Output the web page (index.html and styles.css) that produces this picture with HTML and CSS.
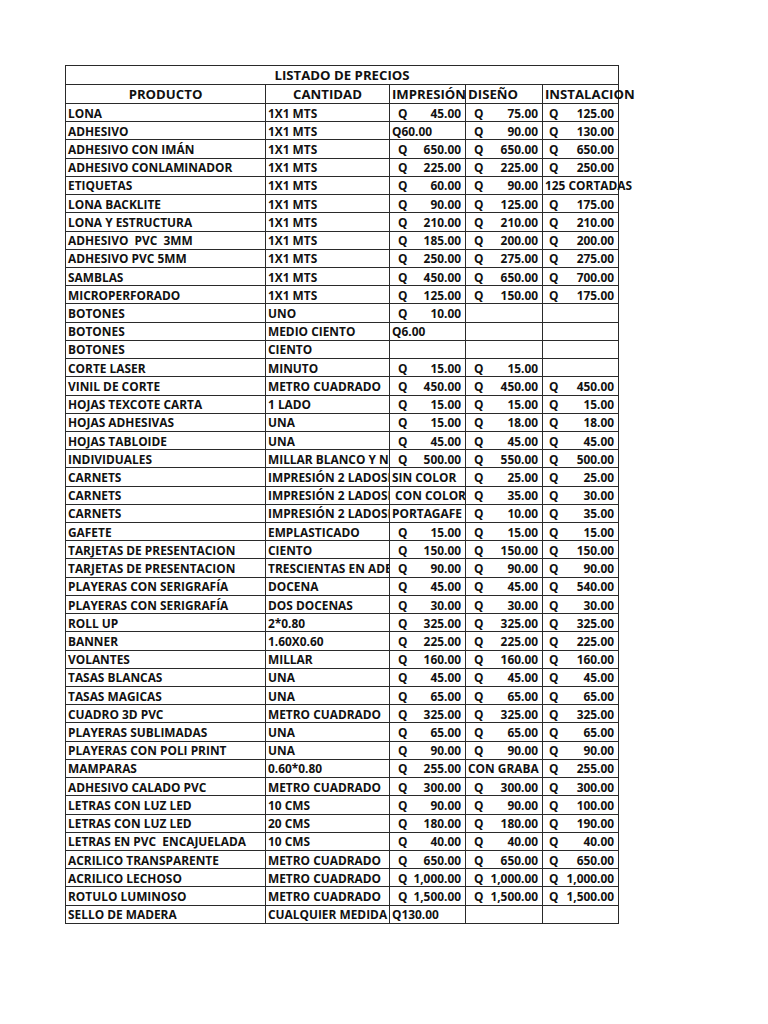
FILE: index.html
```html
<!DOCTYPE html>
<html lang="es">
<head>
<meta charset="utf-8">
<title>Listado de precios</title>
<link rel="stylesheet" href="styles.css">
</head>
<body>
<div class="page">
<table class="sheet">
<colgroup><col class="c1"><col class="c2"><col class="c3"><col class="c4"><col class="c5"></colgroup>
<tr class="title"><td colspan="5">LISTADO DE PRECIOS</td></tr>
<tr class="head"><td class="ctr">PRODUCTO</td><td class="ctr">CANTIDAD</td><td>IMPRESIÓN</td><td>DISEÑO</td><td>INSTALACION</td></tr>
<tr><td>LONA</td><td>1X1 MTS</td><td class="n"><span>Q</span>45.00</td><td class="n"><span>Q</span>75.00</td><td class="n"><span>Q</span>125.00</td></tr>
<tr><td>ADHESIVO</td><td>1X1 MTS</td><td>Q60.00</td><td class="n"><span>Q</span>90.00</td><td class="n"><span>Q</span>130.00</td></tr>
<tr><td>ADHESIVO CON IMÁN</td><td>1X1 MTS</td><td class="n"><span>Q</span>650.00</td><td class="n"><span>Q</span>650.00</td><td class="n"><span>Q</span>650.00</td></tr>
<tr><td>ADHESIVO CONLAMINADOR</td><td>1X1 MTS</td><td class="n"><span>Q</span>225.00</td><td class="n"><span>Q</span>225.00</td><td class="n"><span>Q</span>250.00</td></tr>
<tr><td>ETIQUETAS</td><td>1X1 MTS</td><td class="n"><span>Q</span>60.00</td><td class="n"><span>Q</span>90.00</td><td>125 CORTADAS</td></tr>
<tr><td>LONA BACKLITE</td><td>1X1 MTS</td><td class="n"><span>Q</span>90.00</td><td class="n"><span>Q</span>125.00</td><td class="n"><span>Q</span>175.00</td></tr>
<tr><td>LONA Y ESTRUCTURA</td><td>1X1 MTS</td><td class="n"><span>Q</span>210.00</td><td class="n"><span>Q</span>210.00</td><td class="n"><span>Q</span>210.00</td></tr>
<tr><td>ADHESIVO&nbsp; PVC&nbsp; 3MM</td><td>1X1 MTS</td><td class="n"><span>Q</span>185.00</td><td class="n"><span>Q</span>200.00</td><td class="n"><span>Q</span>200.00</td></tr>
<tr><td>ADHESIVO PVC 5MM</td><td>1X1 MTS</td><td class="n"><span>Q</span>250.00</td><td class="n"><span>Q</span>275.00</td><td class="n"><span>Q</span>275.00</td></tr>
<tr><td>SAMBLAS</td><td>1X1 MTS</td><td class="n"><span>Q</span>450.00</td><td class="n"><span>Q</span>650.00</td><td class="n"><span>Q</span>700.00</td></tr>
<tr><td>MICROPERFORADO</td><td>1X1 MTS</td><td class="n"><span>Q</span>125.00</td><td class="n"><span>Q</span>150.00</td><td class="n"><span>Q</span>175.00</td></tr>
<tr><td>BOTONES</td><td>UNO</td><td class="n"><span>Q</span>10.00</td><td></td><td></td></tr>
<tr><td>BOTONES</td><td>MEDIO CIENTO</td><td>Q6.00</td><td></td><td></td></tr>
<tr><td>BOTONES</td><td>CIENTO</td><td></td><td></td><td></td></tr>
<tr><td>CORTE LASER</td><td>MINUTO</td><td class="n"><span>Q</span>15.00</td><td class="n"><span>Q</span>15.00</td><td></td></tr>
<tr><td>VINIL DE CORTE</td><td>METRO CUADRADO</td><td class="n"><span>Q</span>450.00</td><td class="n"><span>Q</span>450.00</td><td class="n"><span>Q</span>450.00</td></tr>
<tr><td>HOJAS TEXCOTE CARTA</td><td>1 LADO</td><td class="n"><span>Q</span>15.00</td><td class="n"><span>Q</span>15.00</td><td class="n"><span>Q</span>15.00</td></tr>
<tr><td>HOJAS ADHESIVAS</td><td>UNA</td><td class="n"><span>Q</span>15.00</td><td class="n"><span>Q</span>18.00</td><td class="n"><span>Q</span>18.00</td></tr>
<tr><td>HOJAS TABLOIDE</td><td>UNA</td><td class="n"><span>Q</span>45.00</td><td class="n"><span>Q</span>45.00</td><td class="n"><span>Q</span>45.00</td></tr>
<tr><td>INDIVIDUALES</td><td class="clip">MILLAR BLANCO Y NE</td><td class="n"><span>Q</span>500.00</td><td class="n"><span>Q</span>550.00</td><td class="n"><span>Q</span>500.00</td></tr>
<tr><td>CARNETS</td><td class="clip">IMPRESIÓN 2 LADOSP</td><td>SIN COLOR</td><td class="n"><span>Q</span>25.00</td><td class="n"><span>Q</span>25.00</td></tr>
<tr><td>CARNETS</td><td class="clip">IMPRESIÓN 2 LADOSP</td><td class="clip">&nbsp;CON COLOR</td><td class="n"><span>Q</span>35.00</td><td class="n"><span>Q</span>30.00</td></tr>
<tr><td>CARNETS</td><td class="clip">IMPRESIÓN 2 LADOSP</td><td class="clip">PORTAGAFE</td><td class="n"><span>Q</span>10.00</td><td class="n"><span>Q</span>35.00</td></tr>
<tr><td>GAFETE</td><td>EMPLASTICADO</td><td class="n"><span>Q</span>15.00</td><td class="n"><span>Q</span>15.00</td><td class="n"><span>Q</span>15.00</td></tr>
<tr><td>TARJETAS DE PRESENTACION</td><td>CIENTO</td><td class="n"><span>Q</span>150.00</td><td class="n"><span>Q</span>150.00</td><td class="n"><span>Q</span>150.00</td></tr>
<tr><td>TARJETAS DE PRESENTACION</td><td class="clip">TRESCIENTAS EN ADE</td><td class="n"><span>Q</span>90.00</td><td class="n"><span>Q</span>90.00</td><td class="n"><span>Q</span>90.00</td></tr>
<tr><td>PLAYERAS CON SERIGRAFÍA</td><td>DOCENA</td><td class="n"><span>Q</span>45.00</td><td class="n"><span>Q</span>45.00</td><td class="n"><span>Q</span>540.00</td></tr>
<tr><td>PLAYERAS CON SERIGRAFÍA</td><td>DOS DOCENAS</td><td class="n"><span>Q</span>30.00</td><td class="n"><span>Q</span>30.00</td><td class="n"><span>Q</span>30.00</td></tr>
<tr><td>ROLL UP</td><td>2*0.80</td><td class="n"><span>Q</span>325.00</td><td class="n"><span>Q</span>325.00</td><td class="n"><span>Q</span>325.00</td></tr>
<tr><td>BANNER</td><td>1.60X0.60</td><td class="n"><span>Q</span>225.00</td><td class="n"><span>Q</span>225.00</td><td class="n"><span>Q</span>225.00</td></tr>
<tr><td>VOLANTES</td><td>MILLAR</td><td class="n"><span>Q</span>160.00</td><td class="n"><span>Q</span>160.00</td><td class="n"><span>Q</span>160.00</td></tr>
<tr><td>TASAS BLANCAS</td><td>UNA</td><td class="n"><span>Q</span>45.00</td><td class="n"><span>Q</span>45.00</td><td class="n"><span>Q</span>45.00</td></tr>
<tr><td>TASAS MAGICAS</td><td>UNA</td><td class="n"><span>Q</span>65.00</td><td class="n"><span>Q</span>65.00</td><td class="n"><span>Q</span>65.00</td></tr>
<tr><td>CUADRO 3D PVC</td><td>METRO CUADRADO</td><td class="n"><span>Q</span>325.00</td><td class="n"><span>Q</span>325.00</td><td class="n"><span>Q</span>325.00</td></tr>
<tr><td>PLAYERAS SUBLIMADAS</td><td>UNA</td><td class="n"><span>Q</span>65.00</td><td class="n"><span>Q</span>65.00</td><td class="n"><span>Q</span>65.00</td></tr>
<tr><td>PLAYERAS CON POLI PRINT</td><td>UNA</td><td class="n"><span>Q</span>90.00</td><td class="n"><span>Q</span>90.00</td><td class="n"><span>Q</span>90.00</td></tr>
<tr><td>MAMPARAS</td><td>0.60*0.80</td><td class="n"><span>Q</span>255.00</td><td class="clip">CON GRABA</td><td class="n"><span>Q</span>255.00</td></tr>
<tr><td>ADHESIVO CALADO PVC</td><td>METRO CUADRADO</td><td class="n"><span>Q</span>300.00</td><td class="n"><span>Q</span>300.00</td><td class="n"><span>Q</span>300.00</td></tr>
<tr><td>LETRAS CON LUZ LED</td><td>10 CMS</td><td class="n"><span>Q</span>90.00</td><td class="n"><span>Q</span>90.00</td><td class="n"><span>Q</span>100.00</td></tr>
<tr><td>LETRAS CON LUZ LED</td><td>20 CMS</td><td class="n"><span>Q</span>180.00</td><td class="n"><span>Q</span>180.00</td><td class="n"><span>Q</span>190.00</td></tr>
<tr><td>LETRAS EN PVC&nbsp; ENCAJUELADA</td><td>10 CMS</td><td class="n"><span>Q</span>40.00</td><td class="n"><span>Q</span>40.00</td><td class="n"><span>Q</span>40.00</td></tr>
<tr><td>ACRILICO TRANSPARENTE</td><td>METRO CUADRADO</td><td class="n"><span>Q</span>650.00</td><td class="n"><span>Q</span>650.00</td><td class="n"><span>Q</span>650.00</td></tr>
<tr><td>ACRILICO LECHOSO</td><td>METRO CUADRADO</td><td class="n"><span>Q</span>1,000.00</td><td class="n"><span>Q</span>1,000.00</td><td class="n"><span>Q</span>1,000.00</td></tr>
<tr><td>ROTULO LUMINOSO</td><td>METRO CUADRADO</td><td class="n"><span>Q</span>1,500.00</td><td class="n"><span>Q</span>1,500.00</td><td class="n"><span>Q</span>1,500.00</td></tr>
<tr><td>SELLO DE MADERA</td><td>CUALQUIER MEDIDA</td><td>Q130.00</td><td></td><td></td></tr>
</table>
</div>
</body>
</html>
```

FILE: styles.css
```css
html, body {
  margin: 0;
  padding: 0;
  background: #ffffff;
}

.page {
  padding: 65px 0 0 65px;
  width: 768px;
  height: 1024px;
  box-sizing: border-box;
}

.sheet {
  border-collapse: collapse;
  table-layout: fixed;
  width: 553px;
  font-family: "Open Sans", "Liberation Sans", sans-serif;
  font-weight: 700;
  font-size: 11.9px;
  color: #111111;
}

.c1 { width: 200px; }
.c2 { width: 124px; }
.c3 { width: 76px; }
.c4 { width: 77px; }
.c5 { width: 76px; }

.sheet td {
  border: 1px solid #2a2a2a;
  padding: 0 2px 0 2px;
  height: 18.22px;
  line-height: 14px;
  white-space: nowrap;
  overflow: visible;
  vertical-align: middle;
  box-sizing: border-box;
}

.sheet tr.title td,
.sheet tr.head td {
  height: 19px;
  font-size: 13.2px;
}

.sheet tr.title td {
  text-align: center;
}

.sheet td.ctr {
  text-align: center;
}

.sheet td.clip {
  overflow: hidden;
}

.sheet td.n {
  text-align: right;
  padding-left: 8px;
  padding-right: 4px;
}

.sheet td.n:nth-child(5) {
  padding-left: 6px;
}

.sheet td.n span {
  float: left;
}
```
